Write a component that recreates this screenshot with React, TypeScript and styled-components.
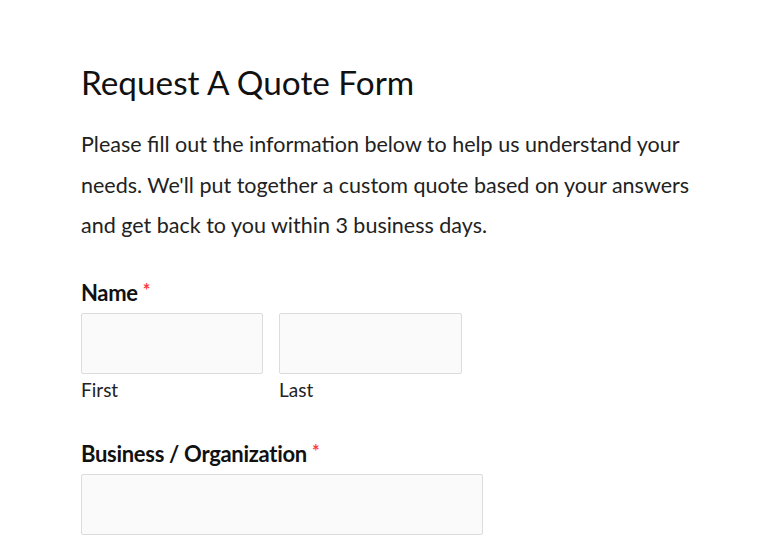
import React from "react";
import styled, { createGlobalStyle } from "styled-components";

const GlobalStyle = createGlobalStyle`
  html, body {
    margin: 0;
    padding: 0;
    background: #ffffff;
  }
  body {
    font-family: Lato, "Noto Sans", sans-serif;
    color: #222222;
  }
  * {
    box-sizing: border-box;
  }
`;

const Page = styled.div`
  padding: 58px 40px 0 81px;
  width: 768px;
  height: 556px;
  overflow: hidden;
`;

const Title = styled.h1`
  margin: 0;
  font-size: 33.3px;
  font-weight: 400;
  line-height: 48px;
  color: #111111;
`;

const Intro = styled.p`
  margin: 18px 0 0 0;
  font-size: 21.5px;
  line-height: 40.5px;
  color: #222222;
  max-width: 632px;
`;

const Form = styled.form`
  display: flex;
  flex-direction: column;
  gap: 39px;
  margin-top: 33px;
`;

const Field = styled.div`
  display: flex;
  flex-direction: column;
`;

const Label = styled.label`
  font-size: 22px;
  font-weight: 700;
  line-height: 28px;
  color: #111111;
  margin-bottom: 6px;
  letter-spacing: -0.3px;
`;

const Required = styled.span`
  color: #ff3b3b;
  font-weight: 700;
  font-size: 18px;
  margin-left: 5px;
  vertical-align: top;
  position: relative;
  top: -3px;
`;

const Row = styled.div`
  display: flex;
  gap: 16px;
`;

const SubField = styled.div`
  display: flex;
  flex-direction: column;
`;

const Input = styled.input<{ $width: number }>`
  width: ${(p) => p.$width}px;
  height: 61px;
  background: #fafafa;
  border: 1px solid #dcdcdc;
  border-radius: 2px;
  padding: 0 12px;
  font-family: inherit;
  font-size: 17px;
  outline: none;
`;

const SubLabel = styled.span`
  font-size: 19px;
  line-height: 22px;
  margin-top: 5px;
  color: #222222;
`;

const App = () => {
  return (
    <Page>
      <GlobalStyle />
      <Title>Request A Quote Form</Title>
      <Intro>
        Please fill out the information below to help us understand your
        needs. We'll put together a custom quote based on your answers and get
        back to you within 3 business days.
      </Intro>
      <Form>
        <Field>
          <Label>
            Name<Required>*</Required>
          </Label>
          <Row>
            <SubField>
              <Input $width={182} />
              <SubLabel>First</SubLabel>
            </SubField>
            <SubField>
              <Input $width={183} />
              <SubLabel>Last</SubLabel>
            </SubField>
          </Row>
        </Field>
        <Field>
          <Label>
            Business / Organization<Required>*</Required>
          </Label>
          <Input $width={402} />
        </Field>
      </Form>
    </Page>
  );
};

export default App;
